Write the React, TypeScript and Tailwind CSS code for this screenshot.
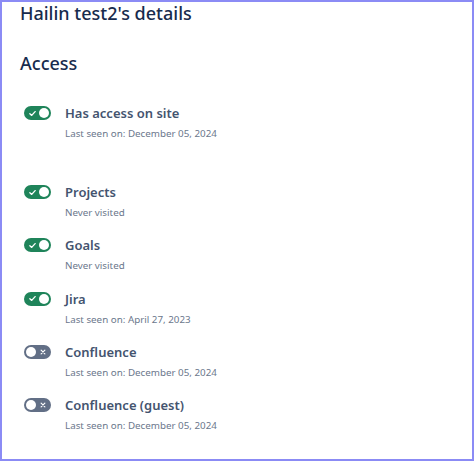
import React from 'react'

type Product = {
    name: string
    detail: string
    enabled: boolean
}

const site: Product = {
    name: 'Has access on site',
    detail: 'Last seen on: December 05, 2024',
    enabled: true,
}

const products: Product[] = [
    { name: 'Projects', detail: 'Never visited', enabled: true },
    { name: 'Goals', detail: 'Never visited', enabled: true },
    { name: 'Jira', detail: 'Last seen on: April 27, 2023', enabled: true },
    { name: 'Confluence', detail: 'Last seen on: December 05, 2024', enabled: false },
    { name: 'Confluence (guest)', detail: 'Last seen on: December 05, 2024', enabled: false },
]

function Toggle({ on }: { on: boolean }) {
    if (on) {
        return (
            <div className="flex h-[14px] w-[27px] items-center justify-between rounded-full bg-[#1f845a] pl-[5px] pr-[2px]">
                <svg width="7" height="7" viewBox="0 0 8 8" fill="none">
                    <path d="M1 4.2 3.1 6.2 7 1.8" stroke="white" strokeWidth="1.5" strokeLinecap="round" strokeLinejoin="round" />
                </svg>
                <div className="h-[10px] w-[10px] rounded-full bg-white" />
            </div>
        )
    }
    return (
        <div className="flex h-[14px] w-[27px] items-center justify-between rounded-full bg-[#626f86] pl-[2px] pr-[5px]">
            <div className="h-[10px] w-[10px] rounded-full bg-white" />
            <svg width="6" height="6" viewBox="0 0 8 8" fill="none">
                <path d="M1.5 1.5 6.5 6.5M6.5 1.5 1.5 6.5" stroke="white" strokeWidth="1.6" strokeLinecap="round" />
            </svg>
        </div>
    )
}

function Row({ item }: { item: Product }) {
    return (
        <div className="flex flex-row">
            <div className="flex h-[18px] w-[45px] shrink-0 items-center pl-1">
                <Toggle on={item.enabled} />
            </div>
            <div className="flex flex-col gap-[4px]">
                <p className="text-[13px] leading-[18px] font-semibold text-[#44546f]">{item.name}</p>
                <p className="text-[9.8px] leading-[16px] text-[#6b778c]">{item.detail}</p>
            </div>
        </div>
    )
}

export default function App() {
    return (
        <div
            className="h-[461px] w-[474px] overflow-hidden border-2 border-[#8b8bf5] bg-white pl-[18px]"
            style={{ fontFamily: '"Noto Sans", "Open Sans", sans-serif' }}
        >
            <h1 className="-mt-px text-[18px] leading-[24px] font-medium text-[#172b4d]">
                Hailin test2's details
            </h1>
            <h2 className="mt-[26px] text-[18px] leading-[24px] font-medium text-[#172b4d]">
                Access
            </h2>
            <div className="mt-[29px]">
                <Row item={site} />
            </div>
            <div className="mt-[41px] flex flex-col gap-[15.3px]">
                {products.map((p) => (
                    <Row key={p.name} item={p} />
                ))}
            </div>
        </div>
    )
}
